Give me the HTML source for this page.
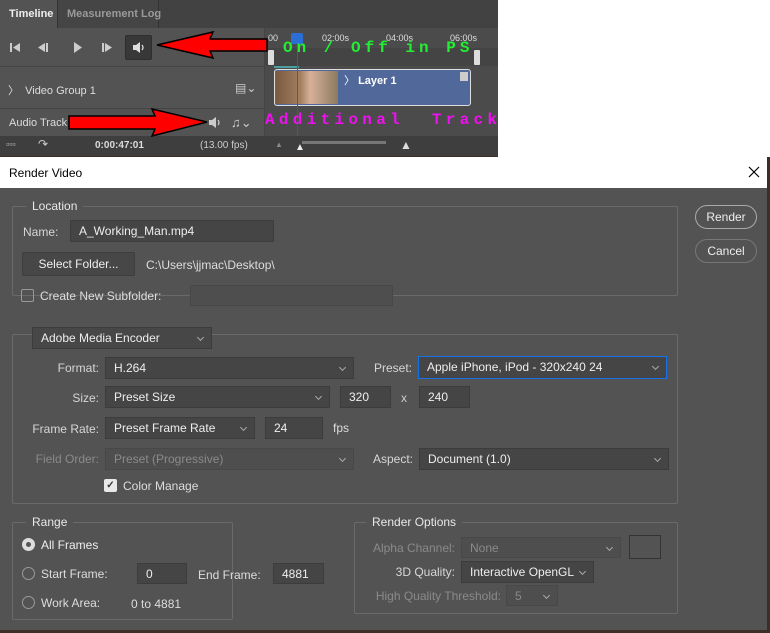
<!DOCTYPE html>
<html><head><meta charset="utf-8"><style>
*{margin:0;padding:0;box-sizing:border-box}
body{width:770px;height:633px;overflow:hidden;background:#3a2e26;font-family:"Liberation Sans",sans-serif;font-size:12px;color:#e6e6e6;position:relative}
.a{position:absolute;white-space:nowrap}
.box{position:absolute;border:1px solid #3c3c3c;background:#454545;color:#eee;padding:3px 8px;line-height:14px}
.sel::after{content:"";position:absolute;right:8px;top:7px;width:4px;height:4px;border-right:1px solid #aaa;border-bottom:1px solid #aaa;transform:rotate(45deg)}
.dis{background:#4e4e4e;color:#8a8a8a;border-color:#484848}
.grp{position:absolute;border:1px solid #6a6a6a;border-radius:2px}
.leg{position:absolute;background:#535353;padding:0 6px;color:#e8e8e8}
.lbl{position:absolute;color:#d6d6d6;text-align:right}
.radio{position:absolute;width:13px;height:13px;border-radius:50%;border:1px solid #9a9a9a}
</style></head><body>
<!-- timeline panel -->
<div class="a" style="left:0;top:0;width:498px;height:156px;background:#535353"></div>
<div class="a" style="left:0;top:0;width:498px;height:28px;background:#424242"></div>
<div class="a" style="left:0;top:0;width:57px;height:28px;background:#535353;font-weight:bold;font-size:11px;padding:8px 0 0 9px;color:#eee">Timeline</div>
<div class="a" style="left:57px;top:0;width:102px;height:28px;background:#454545;border-left:1px solid #333;border-right:1px solid #333;font-weight:bold;font-size:11px;padding:8px 0 0 9px;color:#9a9a9a">Measurement Log</div>
<div class="a" style="left:0;top:66px;width:265px;height:1px;background:#444"></div>
<div class="a" style="left:0;top:108px;width:265px;height:1px;background:#444"></div>
<div class="a" style="left:264px;top:28px;width:1px;height:108px;background:#444"></div>
<div class="a" style="left:265px;top:28px;width:233px;height:108px;background:#4b4b4b"></div>
<div class="a" style="left:265px;top:48px;width:233px;height:18px;background:#444"></div>
<div class="a" style="left:0;top:136px;width:498px;height:20px;background:#3e3e3e"></div>
<svg class="a" style="left:0;top:35px" width="125" height="25" fill="#ccc">
<rect x="10" y="8" width="2" height="9"/><polygon points="20,8 13,12.5 20,17"/>
<polygon points="45,8 38,12.5 45,17"/><rect x="46" y="8" width="2" height="9"/>
<polygon points="74,7 82,12.5 74,18"/>
<rect x="102" y="8" width="2" height="9"/><polygon points="105,8 112,12.5 105,17"/>
</svg>
<div class="a" style="left:125px;top:35px;width:27px;height:25px;background:#383838;border:1px solid #2e2e2e;border-radius:2px"></div>
<svg class="a" style="left:131px;top:40px" width="16" height="15"><polygon points="2,5 5,5 9,2 9,13 5,10 2,10" fill="#ddd"/><path d="M11,5 Q13,7.5 11,10" stroke="#ddd" stroke-width="1.3" fill="none"/></svg>
<div class="a" style="left:268px;top:33px;font-size:9px;color:#ddd">00</div>
<div class="a" style="left:322px;top:33px;font-size:9px;color:#ddd">02:00s</div>
<div class="a" style="left:386px;top:33px;font-size:9px;color:#ddd">04:00s</div>
<div class="a" style="left:450px;top:33px;font-size:9px;color:#ddd">06:00s</div>
<div class="a" style="left:291px;top:33px;width:12px;height:11px;background:#2a6ed6;border-radius:2px 2px 0 0"></div>
<div class="a" style="left:268px;top:50px;width:6px;height:15px;background:#ddd;border-radius:1px"></div>
<div class="a" style="left:474px;top:50px;width:6px;height:15px;background:#ddd;border-radius:1px"></div>
<div class="a" style="left:274px;top:66px;width:25px;height:2px;background:#4aa0a0"></div>
<div class="a" style="left:274px;top:69px;width:197px;height:37px;background:#50699a;border:1px solid #ddd;border-radius:3px"></div>
<div class="a" style="left:276px;top:71px;width:62px;height:33px;background:linear-gradient(90deg,#7a5a40,#a58060 40%,#d8b09a 55%,#8a7a60)"></div>
<div class="a" style="left:344px;top:72px;color:#fff;font-size:11px">〉 <b>Layer 1</b></div>
<div class="a" style="left:460px;top:72px;width:8px;height:9px;background:#ccc"></div>
<div class="a" style="left:297px;top:44px;width:1px;height:92px;background:#e02020"></div>
<div class="a" style="left:8px;top:82px;color:#ddd;font-size:11px">〉&nbsp; Video Group 1</div>
<div class="a" style="left:235px;top:81px;color:#ccc;font-size:12px">▤⌄</div>
<div class="a" style="left:9px;top:117px;color:#ddd;font-size:11px">Audio Track</div>
<svg class="a" style="left:207px;top:115px" width="16" height="15"><polygon points="2,5 5,5 9,2 9,13 5,10 2,10" fill="#ccc"/><path d="M11,5 Q13,7.5 11,10" stroke="#ccc" stroke-width="1.3" fill="none"/></svg>
<div class="a" style="left:231px;top:115px;color:#ccc;font-size:13px">♫⌄</div>
<div class="a" style="left:6px;top:139px;color:#ccc;font-size:9px">▫▫▫</div>
<div class="a" style="left:38px;top:137px;color:#ccc;font-size:12px">↷</div>
<div class="a" style="left:95px;top:140px;color:#ddd;font-size:10px;font-weight:bold">0:00:47:01</div>
<div class="a" style="left:200px;top:140px;color:#ccc;font-size:10px">(13.00 fps)</div>
<div class="a" style="left:302px;top:141px;width:84px;height:3px;background:#777"></div>
<div class="a" style="left:275px;top:140px;color:#888;font-size:8px">▲</div>
<div class="a" style="left:295px;top:142px;color:#eee;font-size:10px">▲</div>
<div class="a" style="left:400px;top:138px;color:#ddd;font-size:12px">▲</div>
<svg class="a" style="left:155px;top:30px" width="115" height="30"><polygon points="2,15 58,2 55,9 112,9 112,21 55,21 58,28" fill="#f00" stroke="#000" stroke-width="1.5"/></svg>
<svg class="a" style="left:67px;top:108px" width="142" height="30"><polygon points="140,14 85,1 88,8 2,8 2,21 88,21 85,28" fill="#f00" stroke="#000" stroke-width="1.5"/></svg>
<div class="a" style="left:283px;top:39px;color:#22ee33;font-family:'Liberation Mono',monospace;font-weight:bold;font-size:16px;letter-spacing:4px">On / Off in PS</div>
<div class="a" style="left:265px;top:111px;color:#ee10ee;font-family:'Liberation Mono',monospace;font-weight:bold;font-size:16px;letter-spacing:4.3px">Additional&nbsp; Track</div>
<div class="a" style="left:498px;top:0;width:272px;height:157px;background:#fff"></div>
<!-- dialog -->
<div class="a" style="left:0;top:157px;width:767px;height:31px;background:#fff;color:#000;font-size:12px;padding:9px 0 0 9px">Render Video</div>
<svg class="a" style="left:748px;top:166px" width="12" height="12"><path d="M1,1 L11,11 M11,1 L1,11" stroke="#000" stroke-width="1.2"/></svg>
<div class="a" style="left:0;top:188px;width:767px;height:442px;background:#535353"></div>
<div class="a" style="left:695px;top:205px;width:62px;height:24px;border:1px solid #aaa;border-radius:12px;text-align:center;line-height:22px;color:#eee">Render</div>
<div class="a" style="left:695px;top:239px;width:62px;height:24px;border:1px solid #777;border-radius:12px;text-align:center;line-height:22px;color:#eee">Cancel</div>

<div class="grp" style="left:12px;top:206px;width:666px;height:90px"></div>
<div class="leg" style="left:26px;top:199px">Location</div>
<div class="lbl" style="left:23px;top:225px">Name:</div>
<div class="box" style="left:70px;top:220px;width:204px;height:22px">A_Working_Man.mp4</div>
<div class="a" style="left:22px;top:252px;width:113px;height:24px;background:#474747;border:1px solid #3e3e3e;border-radius:2px;text-align:center;line-height:22px;color:#eee">Select Folder...</div>
<div class="a" style="left:146px;top:258px;color:#ddd">C:\Users\jjmac\Desktop\</div>
<div class="a" style="left:21px;top:289px;width:13px;height:13px;border:1px solid #999;border-radius:2px"></div>
<div class="a" style="left:40px;top:289px;color:#ddd">Create New Subfolder:</div>
<div class="box dis" style="left:190px;top:285px;width:203px;height:21px"></div>

<div class="grp" style="left:12px;top:334px;width:666px;height:170px"></div>
<div class="box sel" style="left:32px;top:327px;width:180px;height:22px;background:#474747;color:#eee;padding-left:8px">Adobe Media Encoder</div>
<div class="lbl" style="left:30px;top:361px;width:69px">Format:</div>
<div class="box sel" style="left:105px;top:357px;width:249px;height:22px">H.264</div>
<div class="lbl" style="left:360px;top:361px;width:52px">Preset:</div>
<div class="box sel" style="left:418px;top:356px;width:249px;height:23px;border-color:#1473e6">Apple iPhone, iPod - 320x240 24</div>
<div class="lbl" style="left:30px;top:391px;width:69px">Size:</div>
<div class="box sel" style="left:105px;top:386px;width:225px;height:22px">Preset Size</div>
<div class="box" style="left:340px;top:386px;width:51px;height:22px">320</div>
<div class="a" style="left:401px;top:391px;color:#ccc">x</div>
<div class="box" style="left:419px;top:386px;width:51px;height:22px">240</div>
<div class="lbl" style="left:20px;top:422px;width:79px">Frame Rate:</div>
<div class="box sel" style="left:105px;top:417px;width:150px;height:22px">Preset Frame Rate</div>
<div class="box" style="left:265px;top:417px;width:58px;height:22px">24</div>
<div class="a" style="left:333px;top:421px;color:#ddd">fps</div>
<div class="lbl" style="left:20px;top:452px;width:79px;color:#8a8a8a">Field Order:</div>
<div class="box sel dis" style="left:105px;top:448px;width:249px;height:22px">Preset (Progressive)</div>
<div class="lbl" style="left:360px;top:452px;width:53px">Aspect:</div>
<div class="box sel" style="left:419px;top:448px;width:250px;height:22px">Document (1.0)</div>
<div class="a" style="left:104px;top:479px;width:13px;height:13px;background:#e8e8e8;border-radius:2px;color:#333;font-size:10px;line-height:13px;text-align:center;font-weight:bold">✓</div>
<div class="a" style="left:123px;top:479px;color:#ddd">Color Manage</div>

<div class="grp" style="left:12px;top:522px;width:221px;height:98px"></div>
<div class="leg" style="left:26px;top:515px">Range</div>
<div class="radio" style="left:22px;top:538px;background:#ddd;border-color:#ddd"><div style="margin:3px;width:5px;height:5px;border-radius:50%;background:#555"></div></div>
<div class="a" style="left:41px;top:538px;color:#eee">All Frames</div>
<div class="radio" style="left:22px;top:567px"></div>
<div class="a" style="left:41px;top:567px;color:#ddd">Start Frame:</div>
<div class="box" style="left:137px;top:563px;width:50px;height:21px">0</div>
<div class="a" style="left:198px;top:568px;color:#ddd">End Frame:</div>
<div class="box" style="left:273px;top:563px;width:51px;height:21px">4881</div>
<div class="radio" style="left:22px;top:596px"></div>
<div class="a" style="left:41px;top:596px;color:#ddd">Work Area:</div>
<div class="a" style="left:131px;top:597px;color:#ddd">0 to 4881</div>

<div class="grp" style="left:354px;top:522px;width:324px;height:92px"></div>
<div class="leg" style="left:366px;top:515px">Render Options</div>
<div class="lbl" style="left:340px;top:541px;width:115px;color:#8a8a8a">Alpha Channel:</div>
<div class="box sel dis" style="left:461px;top:537px;width:160px;height:21px">None</div>
<div class="a" style="left:629px;top:535px;width:32px;height:24px;border:1px solid #333"></div>
<div class="lbl" style="left:340px;top:565px;width:115px">3D Quality:</div>
<div class="box sel" style="left:461px;top:561px;width:133px;height:22px;padding-left:8px">Interactive OpenGL</div>
<div class="lbl" style="left:340px;top:589px;width:161px;color:#8a8a8a">High Quality Threshold:</div>
<div class="box sel dis" style="left:506px;top:585px;width:52px;height:21px">5</div>
</body></html>
